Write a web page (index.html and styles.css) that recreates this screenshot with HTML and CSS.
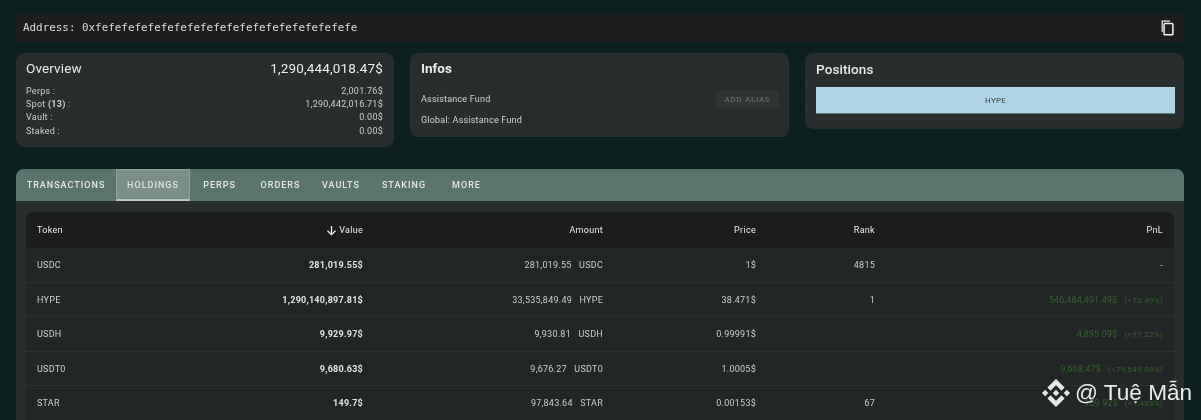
FILE: index.html
```html
<!DOCTYPE html>
<html lang="en">
<head>
<meta charset="utf-8">
<title>Assistance Fund</title>
<link rel="stylesheet" href="styles.css">
</head>
<body>
<main class="page">
  <div class="address-bar">
    <span class="address">Address: 0xfefefefefefefefefefefefefefefefefefefefe</span>
    <svg class="copy" viewBox="0 0 14 16" width="14" height="16"><path d="M2.2 12V1.2H10" fill="none" stroke="#e8e8e8" stroke-width="1.2"/><rect x="4.1" y="3.6" width="8.8" height="11.2" rx="0.8" fill="none" stroke="#f2f2f2" stroke-width="1.5"/></svg>
  </div>
  <section class="cards">
    <div class="card overview">
      <div class="ov-head"><h2>Overview</h2><span class="ov-total">1,290,444,018.47$</span></div>
      <dl class="ov-list">
        <div class="ov-row"><dt>Perps :</dt><dd>2,001.76$</dd></div>
        <div class="ov-row"><dt>Spot <b>(13)</b> :</dt><dd>1,290,442,016.71$</dd></div>
        <div class="ov-row"><dt>Vault :</dt><dd>0.00$</dd></div>
        <div class="ov-row"><dt>Staked :</dt><dd>0.00$</dd></div>
      </dl>
    </div>
    <div class="card infos">
      <h2 class="bold">Infos</h2>
      <div class="info-row"><span>Assistance Fund</span><button class="alias">ADD ALIAS</button></div>
      <div class="info-global">Global: Assistance Fund</div>
    </div>
    <div class="card positions">
      <h2>Positions</h2>
      <div class="treemap">HYPE</div>
    </div>
  </section>
  <section class="panel">
    <nav class="tabs">
      <span class="tab t1">TRANSACTIONS</span>
      <span class="tab t2 active">HOLDINGS</span>
      <span class="tab t3">PERPS</span>
      <span class="tab t4">ORDERS</span>
      <span class="tab t5">VAULTS</span>
      <span class="tab t6">STAKING</span>
      <span class="tab t7">MORE</span>
    </nav>
    <div class="panel-body">
      <div class="table">
        <div class="row head">
          <span>Token</span>
          <span class="r val-head"><svg viewBox="0 0 12 12" width="11" height="11"><path d="M6 1v9.5M1.6 6.2 6 10.6l4.4-4.4" fill="none" stroke="#eee" stroke-width="1.4"/></svg>Value</span>
          <span class="r">Amount</span><span class="r">Price</span><span class="r">Rank</span><span class="r">PnL</span>
        </div>
        <div class="row">
          <span>USDC</span><span class="r val">281,019.55$</span>
          <span class="r amt"><span>281,019.55</span><span>USDC</span></span>
          <span class="r">1$</span><span class="r">4815</span><span class="r">-</span>
        </div>
        <div class="row">
          <span>HYPE</span><span class="r val">1,290,140,897.81$</span>
          <span class="r amt"><span>33,535,849.49</span><span>HYPE</span></span>
          <span class="r">38.471$</span><span class="r">1</span>
          <span class="r pnl">546,484,491.49$<small>(+73.49%)</small></span>
        </div>
        <div class="row">
          <span>USDH</span><span class="r val">9,929.97$</span>
          <span class="r amt"><span>9,930.81</span><span>USDH</span></span>
          <span class="r">0.99991$</span><span class="r"></span>
          <span class="r pnl">4,895.09$<small>(+97.22%)</small></span>
        </div>
        <div class="row">
          <span>USDT0</span><span class="r val">9,680.63$</span>
          <span class="r amt"><span>9,676.27</span><span>USDT0</span></span>
          <span class="r">1.0005$</span><span class="r"></span>
          <span class="r pnl">9,668.47$<small>(+79,549.08%)</small></span>
        </div>
        <div class="row">
          <span>STAR</span><span class="r val">149.7$</span>
          <span class="r amt"><span>97,843.64</span><span>STAR</span></span>
          <span class="r">0.00153$</span><span class="r">67</span>
          <span class="r pnl">139.92$<small>(+1,433%)</small></span>
        </div>
      </div>
    </div>
  </section>
</main>
<div class="watermark">
  <svg viewBox="0 0 126.61 126.61" width="28" height="28"><path fill="#e6e6e6" d="M38.73 53.2l24.59-24.58 24.6 24.6 14.3-14.31L63.32 0 24.43 38.9zM0 63.31l14.3-14.31 14.31 14.31-14.31 14.3zM38.73 73.41l24.59 24.59 24.6-24.6 14.31 14.29-38.9 38.91-38.91-38.88v-.03zM98 63.31l14.3-14.31 14.31 14.3-14.31 14.32zM77.83 63.3L63.32 48.78 52.59 59.51l-1.24 1.23-2.54 2.54 14.51 14.5 14.51-14.47z"/></svg>
  <span>@ Tuệ Mẫn</span>
</div>
</body>
</html>
```
FILE: styles.css
```css
* { box-sizing: border-box; }
html, body { margin: 0; height: 420px; overflow: hidden; }
body {
  background-color: #0b1f1e;
  background-image: radial-gradient(circle, #0d2322 35%, transparent 40%);
  background-size: 3px 3px;
  font-family: Roboto, "Noto Sans", sans-serif;
  color: #d8dada;
  position: relative;
}
.page { padding: 13px 17px 0 16px; display: flex; flex-direction: column; will-change: transform; }
h2 { margin: 0; font-size: 13.5px; font-weight: 500; color: #eceeee; letter-spacing: .1px; }
h2.bold { font-weight: 700; letter-spacing: 0; }

.address-bar {
  height: 29px;
  background: #1c1e1d;
  border-radius: 4px;
  display: flex;
  align-items: center;
  justify-content: space-between;
  padding: 0 10px 0 7px;
}
.address { font-family: "DejaVu Sans Mono", monospace; font-size: 10.9px; color: #dcdedd; }
.copy { display: block; }

.cards { margin-top: 11px; display: grid; grid-template-columns: 378fr 379fr 379fr; gap: 16px; align-items: start; }
.card { background: #282d2d; border-radius: 8px; }
.overview { height: 94px; padding: 7px 11px 0 10px; }
.ov-head { display: flex; justify-content: space-between; align-items: center; height: 16px; }
.ov-head h2 { font-weight: 400; letter-spacing: .12px; }
.ov-total { font-size: 13.5px; font-weight: 400; color: #eceeee; letter-spacing: .15px; }
.ov-list { margin: 9px 0 0; font-size: 9px; line-height: 13.2px; color: #cdd0d0; letter-spacing: .25px; }
.ov-row { display: flex; justify-content: space-between; }
.ov-row dt, .ov-row dd { margin: 0; }
.ov-row b { font-weight: 700; }

.infos { height: 84px; padding: 7px 10px 0 11px; }
.info-row { display: flex; justify-content: space-between; align-items: center; font-size: 9px; margin-top: 14px; color: #d2d5d5; height: 18px; letter-spacing: .2px; }
.alias {
  width: 63px; height: 18px; padding: 0; border: 0; border-radius: 2px;
  background: #2f3534; color: #636b69;
  font: 500 8px Roboto, sans-serif; letter-spacing: .7px;
}
.info-global { font-size: 9px; margin-top: 7px; color: #d2d5d5; letter-spacing: .2px; }

.positions { height: 76px; padding: 8px 9px 0 11px; }
.treemap {
  margin-top: 10px; height: 27px;
  background: #b0d4e7;
  border-bottom: 1px solid #5f7a7c;
  display: flex; align-items: center; justify-content: center;
  font-size: 8px; color: #33403f; letter-spacing: .2px;
}

.panel { margin-top: 22px; background: #282d2d; border-radius: 8px 8px 0 0; }
.tabs {
  height: 32px;
  background: #59736d;
  border-radius: 8px 8px 0 0;
  display: flex;
  font-size: 9px;
  font-weight: 500;
  letter-spacing: 1px;
  color: #e4e8e7;
}
.tab { display: flex; align-items: center; justify-content: center; height: 32px; }
.t1 { width: 100px; }
.t2 { width: 74px; }
.t3 { width: 59px; }
.t4 { width: 63px; }
.t5 { width: 58px; }
.t6 { width: 68px; }
.t7 { width: 57px; }
.active {
  color: #dce2e0;
  border: 1px solid #8fa19c;
  border-bottom: 2px solid #bcc6c3;
  background-color: #7a8f8a;
  background-image: radial-gradient(circle at 50% 50%, #566c67 45%, transparent 50%);
  background-size: 2px 2px;
}
.panel-body { padding: 11px 10px 0; }
.table { background: #222626; border-radius: 8px 8px 0 0; overflow: hidden; }
.row {
  display: grid;
  grid-template-columns: 100px 248px 240px 153px 119px 1fr;
  align-items: center;
  height: 34.5px;
  font-size: 9px;
  letter-spacing: .25px;
  color: #ccd0cf;
  border-bottom: 1px solid #2c3131;
}
.row > span { padding: 1px 11px 0; }
.row > .r { text-align: right; }
.head { height: 36px; background: #1b1d1d; color: #eceeee; font-weight: 400; border-bottom: 0; letter-spacing: .3px; }
.head > span { padding-top: 0; }
.val-head { display: flex; justify-content: flex-end; align-items: center; gap: 2px; }
.val { font-weight: 700; color: #e2e4e4; }
.amt { display: flex; justify-content: flex-end; gap: 7.5px; }
.pnl { color: #35632d; letter-spacing: .12px; }
.pnl small { font-size: 8px; margin-left: 7px; letter-spacing: .3px; }

.watermark {
  position: absolute; left: 1042px; top: 379px;
  display: flex; align-items: center; gap: 5px;
  font-family: "Liberation Sans", sans-serif;
  font-size: 22.6px; color: #ececec;
  white-space: nowrap;
}
```
